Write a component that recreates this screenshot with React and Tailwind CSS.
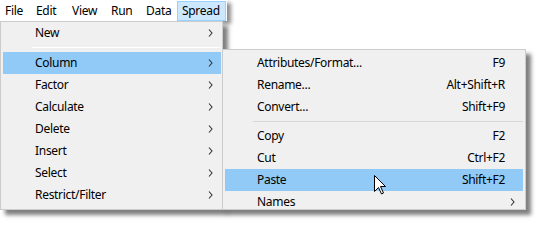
import React from "react";

const font = { fontFamily: '"Noto Sans", "Open Sans", sans-serif' };

const Chevron = () => (
  <svg width="5" height="8" viewBox="0 0 5 8" className="block">
    <path d="M1 0.5 L4 4 L1 7.5" fill="none" stroke="#333" strokeWidth="1.1" />
  </svg>
);

function Item1({ label, active }) {
  return (
    <div
      className={`h-[22px] flex items-center pl-[32px] pr-[8px] ${active ? "bg-[#91c9f7]" : ""}`}
    >
      <span className="flex-1">{label}</span>
      <Chevron />
    </div>
  );
}

function Item2({ label, shortcut, active, arrow }) {
  return (
    <div
      className={`h-[22px] flex items-center pl-[32px] pr-[18px] ${active ? "bg-[#91c9f7]" : ""}`}
    >
      <span className="flex-1">{label}</span>
      {shortcut && <span>{shortcut}</span>}
      {arrow && (
        <span className="-mr-[10px]">
          <Chevron />
        </span>
      )}
    </div>
  );
}

const bar = [
  ["File", "w-[31px]"],
  ["Edit", "w-[36px]"],
  ["View", "w-[39px]"],
  ["Run", "w-[35px]"],
  ["Data", "w-[31px]"],
];

export default function App() {
  return (
    <div
      className="relative w-[540px] h-[225px] bg-white text-[12px] leading-[16px] tracking-[-0.3px] text-black overflow-hidden"
      style={font}
    >
      <div className="w-[227px] h-[21px] bg-white flex items-center pl-[5px] shadow-[4px_3px_4px_rgba(0,0,0,0.45)]">
        {bar.map(([m, w]) => (
          <div key={m} className={`${w} h-[19px] flex items-center`}>
            {m}
          </div>
        ))}
        <div className="w-[49px] pl-[4px] h-[20px] flex items-center bg-[#cce8ff] border border-[#99d1ff]">
          Spread
        </div>
      </div>

      <div className="absolute left-0 top-[21px] w-[223px] h-[189px] bg-[#f0f0f0] border border-[#cccccc] pl-[2px] pr-[1px] shadow-[5px_5px_4px_rgba(0,0,0,0.5)]">
        <Item1 label="New" />
        <div className="h-[8px] pt-[3px] pl-[29px] pr-[1px]">
          <div className="h-[1px] bg-white" />
        </div>
        <Item1 label="Column" active />
        <Item1 label="Factor" />
        <Item1 label="Calculate" />
        <Item1 label="Delete" />
        <Item1 label="Insert" />
        <Item1 label="Select" />
        <Item1 label="Restrict/Filter" />
      </div>

      <div className="absolute left-[222px] top-[49px] w-[304px] h-[161px] bg-[#f0f0f0] border border-[#cccccc] pt-[2px] pl-[2px] pr-[2px] overflow-hidden shadow-[5px_5px_4px_rgba(0,0,0,0.5)]">
        <Item2 label="Attributes/Format..." shortcut="F9" />
        <Item2 label="Rename..." shortcut="Alt+Shift+R" />
        <Item2 label="Convert..." shortcut="Shift+F9" />
        <div className="h-[7px] pt-[3px] pl-[28px]">
          <div className="h-[1px] bg-[#d7d7d7]" />
        </div>
        <Item2 label="Copy" shortcut="F2" />
        <Item2 label="Cut" shortcut="Ctrl+F2" />
        <Item2 label="Paste" shortcut="Shift+F2" active />
        <Item2 label="Names" arrow />
      </div>

      <svg
        className="absolute left-[374px] top-[175px]"
        width="13"
        height="20"
        viewBox="0 0 13 20"
      >
        <path
          d="M0.5 0.5 L0.5 16.5 L4.5 12.5 L7.5 19 L9.5 18 L6.5 11.5 L11.5 11.5 Z"
          fill="white"
          stroke="black"
          strokeWidth="1"
          strokeLinejoin="miter"
        />
      </svg>
    </div>
  );
}
